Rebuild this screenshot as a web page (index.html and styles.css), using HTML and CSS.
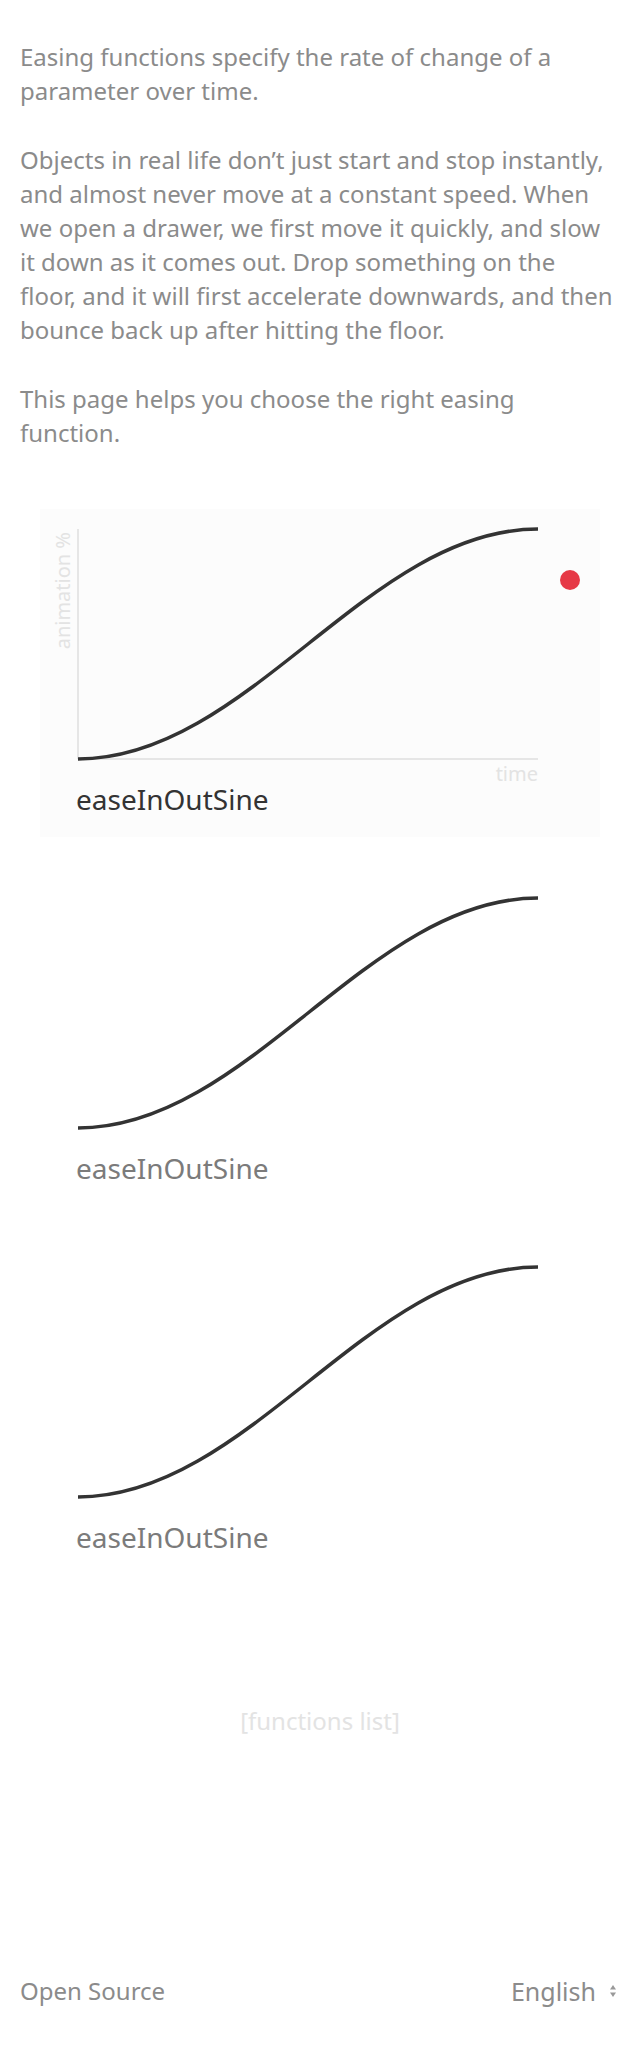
FILE: index.html
```html
<!DOCTYPE html>
<html lang="en">
<head>
<meta charset="utf-8">
<title>Easing Functions</title>
<link rel="stylesheet" href="styles.css">
</head>
<body>
<main class="page">
  <section class="intro">
    <p>Easing functions specify the rate of change of a parameter over time.</p>
    <p>Objects in real life don’t just start and stop instantly, and almost never move at a constant speed. When we open a drawer, we first move it quickly, and slow it down as it comes out. Drop something on the floor, and it will first accelerate downwards, and then bounce back up after hitting the floor.</p>
    <p>This page helps you choose the right easing function.</p>
  </section>

  <section class="charts">
    <div class="card card-active">
      <svg class="chart" width="560" height="273" viewBox="0 0 560 273">
        <line class="axis" x1="38" y1="20" x2="38" y2="250"/>
        <line class="axis" x1="38" y1="250" x2="498" y2="250"/>
        <text class="axis-label" transform="translate(29.5 23) rotate(-90)" text-anchor="end">animation %</text>
        <text class="axis-label" x="498" y="272" text-anchor="end">time</text>
        <path class="curve" d="M38 250 C208.2 250 327.8 20 498 20"/>
        <circle class="dot" cx="530" cy="71" r="10"/>
      </svg>
      <div class="card-label">easeInOutSine</div>
    </div>

    <div class="card">
      <svg class="chart" width="560" height="273" viewBox="0 0 560 273">
        <path class="curve" d="M38 250 C208.2 250 327.8 20 498 20"/>
      </svg>
      <div class="card-label">easeInOutSine</div>
    </div>

    <div class="card">
      <svg class="chart" width="560" height="273" viewBox="0 0 560 273">
        <path class="curve" d="M38 250 C208.2 250 327.8 20 498 20"/>
      </svg>
      <div class="card-label">easeInOutSine</div>
    </div>
  </section>

  <section class="functions">[functions list]</section>

  <footer class="footer">
    <a class="footer-link" href="#">Open Source</a>
    <div class="lang">
      <span class="lang-name">English</span>
      <svg class="lang-arrows" width="6" height="12" viewBox="0 0 6 12">
        <path d="M3 0 L6 4.5 L0 4.5 Z"/>
        <path d="M0 7.5 L6 7.5 L3 12 Z"/>
      </svg>
    </div>
  </footer>
</main>
</body>
</html>
```

FILE: styles.css
```css
* {
  box-sizing: border-box;
}

html, body {
  margin: 0;
  padding: 0;
  background: #ffffff;
}

body {
  font-family: "Noto Sans", "Open Sans", sans-serif;
  font-size: 24px;
  line-height: 34px;
  color: #8b8b8b;
}

.page {
  padding: 40px 20px 0;
}

.intro {
  width: 596px;
}

.intro p {
  margin: 0 0 35px;
}

.intro p:last-child {
  margin-bottom: 0;
}

.charts {
  margin-top: 59px;
  display: flex;
  flex-direction: column;
  gap: 41px;
}

.card {
  margin: 0 20px;
  width: 560px;
  height: 328px;
}

.card-active {
  background: #fcfcfc;
}

.chart {
  display: block;
  overflow: visible;
}

.axis {
  stroke: #e6e6e6;
  stroke-width: 2;
}

.axis-label {
  font-family: "Noto Sans", sans-serif;
  font-size: 20px;
  fill: #e3e3e3;
}

.curve {
  fill: none;
  stroke: #333333;
  stroke-width: 3.5;
}

.dot {
  fill: #e63946;
}

.card-label {
  padding-left: 36px;
  font-size: 28px;
  line-height: 34px;
  color: #7b7b7b;
}

.card-active .card-label {
  color: #333333;
}

.functions {
  margin-top: 129px;
  text-align: center;
  font-size: 24px;
  color: #e3e3e3;
}

.footer {
  margin-top: 236px;
  display: flex;
  justify-content: space-between;
  align-items: center;
}

.footer-link {
  color: #8b8b8b;
  text-decoration: none;
}

.lang {
  display: flex;
  align-items: center;
  gap: 14px;
  padding-right: 4px;
}

.lang-name {
  font-size: 25px;
}

.lang-arrows {
  fill: #999999;
  display: block;
}
```
